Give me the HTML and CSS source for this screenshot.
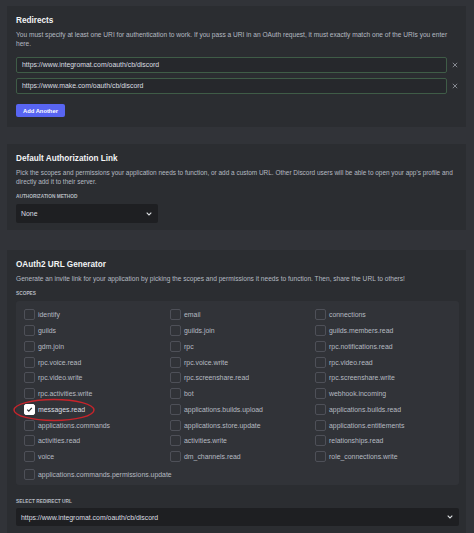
FILE: index.html
```html
<!DOCTYPE html>
<html lang="en">
  <head>
    <meta charset="UTF-8" />
    <meta name="viewport" content="width=device-width, initial-scale=1.0" />
    <title>OAuth2</title>
    <link rel="stylesheet" href="styles.css">
  </head>
  <body>
    <!-- Redirects -->
    <div class="card card-redirects">
      <h2>Redirects</h2>
      <p class="desc">
        You must specify at least one URI for authentication to work. If you pass a URI in an OAuth request, it must exactly match one of the URIs you enter here.
      </p>

      <div class="redirect-row">
        <div class="url-input">https://www.integromat.com/oauth/cb/discord</div>
        <span class="remove">
          <svg width="6" height="6" viewBox="0 0 6 6"><path d="M0.8 0.8L5.2 5.2M5.2 0.8L0.8 5.2" stroke="#8e929a" stroke-width="0.9" /></svg>
        </span>
      </div>
      <div class="redirect-row">
        <div class="url-input">https://www.make.com/oauth/cb/discord</div>
        <span class="remove">
          <svg width="6" height="6" viewBox="0 0 6 6"><path d="M0.8 0.8L5.2 5.2M5.2 0.8L0.8 5.2" stroke="#8e929a" stroke-width="0.9" /></svg>
        </span>
      </div>

      <button class="btn">Add Another</button>
    </div>

    <!-- Default Authorization Link -->
    <div class="card card-auth">
      <h2>Default Authorization Link</h2>
      <p class="desc">
        Pick the scopes and permissions your application needs to function, or add a custom URL. Other Discord users will be able to open your app's profile and directly add it to their server.
      </p>
      <div class="label">Authorization Method</div>
      <div class="select select-method">
        <span>None</span>
        <svg class="chevron" width="6" height="4" viewBox="0 0 6 4"><path d="M0.7 0.7L3 3L5.3 0.7" fill="none" stroke="#dbdee1" stroke-width="1.1" /></svg>
      </div>
    </div>

    <!-- OAuth2 URL Generator -->
    <div class="card card-generator">
      <h2>OAuth2 URL Generator</h2>
      <p class="desc">
        Generate an invite link for your application by picking the scopes and permissions it needs to function. Then, share the URL to others!
      </p>
      <div class="label label-scopes">Scopes</div>

      <div class="scopes">
        <div class="scope"><span class="box"></span>identify</div>
        <div class="scope"><span class="box"></span>email</div>
        <div class="scope"><span class="box"></span>connections</div>

        <div class="scope"><span class="box"></span>guilds</div>
        <div class="scope"><span class="box"></span>guilds.join</div>
        <div class="scope"><span class="box"></span>guilds.members.read</div>

        <div class="scope"><span class="box"></span>gdm.join</div>
        <div class="scope"><span class="box"></span>rpc</div>
        <div class="scope"><span class="box"></span>rpc.notifications.read</div>

        <div class="scope"><span class="box"></span>rpc.voice.read</div>
        <div class="scope"><span class="box"></span>rpc.voice.write</div>
        <div class="scope"><span class="box"></span>rpc.video.read</div>

        <div class="scope"><span class="box"></span>rpc.video.write</div>
        <div class="scope"><span class="box"></span>rpc.screenshare.read</div>
        <div class="scope"><span class="box"></span>rpc.screenshare.write</div>

        <div class="scope"><span class="box"></span>rpc.activities.write</div>
        <div class="scope"><span class="box"></span>bot</div>
        <div class="scope"><span class="box"></span>webhook.incoming</div>

        <div class="scope scope-checked">
          <span class="box checked">
            <svg width="7" height="7" viewBox="0 0 7 7"><path d="M1.2 3.6L2.8 5.1L5.8 1.8" fill="none" stroke="#2b2d31" stroke-width="1.2" /></svg>
          </span>messages.read
          <!-- annotation -->
          <svg class="circle" width="84" height="26" viewBox="0 0 84 26"><ellipse cx="42" cy="13" rx="40" ry="10.5" fill="none" stroke="#c8242b" stroke-width="1.4" /></svg>
        </div>
        <div class="scope"><span class="box"></span>applications.builds.upload</div>
        <div class="scope"><span class="box"></span>applications.builds.read</div>

        <div class="scope"><span class="box"></span>applications.commands</div>
        <div class="scope"><span class="box"></span>applications.store.update</div>
        <div class="scope"><span class="box"></span>applications.entitlements</div>

        <div class="scope"><span class="box"></span>activities.read</div>
        <div class="scope"><span class="box"></span>activities.write</div>
        <div class="scope"><span class="box"></span>relationships.read</div>

        <div class="scope"><span class="box"></span>voice</div>
        <div class="scope"><span class="box"></span>dm_channels.read</div>
        <div class="scope"><span class="box"></span>role_connections.write</div>

        <div class="scope scope-wide"><span class="box"></span>applications.commands.permissions.update</div>
      </div>

      <div class="label label-redirect">Select Redirect URL</div>
      <div class="select select-redirect">
        <span>https://www.integromat.com/oauth/cb/discord</span>
        <svg class="chevron" width="6" height="4" viewBox="0 0 6 4"><path d="M0.7 0.7L3 3L5.3 0.7" fill="none" stroke="#dbdee1" stroke-width="1.1" /></svg>
      </div>
    </div>
  </body>
</html>
```

FILE: styles.css
```css
* {
  margin: 0;
  padding: 0;
  box-sizing: border-box;
}

body {
  font-family: "Liberation Sans", Arial, sans-serif;
  background-color: #313338;
  color: #dbdee1;
  padding: 6px 8px 0 7px;
  overflow: hidden;
}

.card {
  background-color: #2b2d31;
  padding: 10px 7px 10px 9px;
}

.card-auth {
  margin-top: 17px;
  padding-bottom: 7px;
}

.card-generator {
  margin-top: 20px;
}

h2 {
  font-size: 8.2px;
  line-height: 10px;
  font-weight: bold;
  color: #f2f3f5;
}

.desc {
  font-size: 6.6px;
  line-height: 9px;
  color: #b5bac1;
  margin-top: 3.5px;
}

.card-auth .desc {
  font-size: 6.45px;
}

/* redirects */
.redirect-row {
  display: flex;
  align-items: center;
  margin-top: 5px;
}

.card-redirects .desc + .redirect-row {
  margin-top: 9.5px;
}

.url-input {
  flex: 1;
  height: 16px;
  line-height: 14px;
  padding-left: 5px;
  font-size: 6.9px;
  color: #dbdee1;
  background-color: #26282c;
  border: 1px solid #3f5c47;
  border-radius: 2px;
}

.remove {
  display: flex;
  width: 6px;
  margin-left: 5px;
  margin-right: 1px;
}

.btn {
  display: block;
  margin-top: 10px;
  height: 13px;
  padding: 0 7px;
  font-family: inherit;
  font-size: 5.8px;
  font-weight: bold;
  color: #ffffff;
  background-color: #5865f2;
  border: none;
  border-radius: 2px;
}

/* labels + selects */
.label {
  font-size: 4.8px;
  line-height: 6px;
  font-weight: bold;
  text-transform: uppercase;
  color: #b5bac1;
  margin-top: 8.5px;
}

.select {
  display: flex;
  align-items: center;
  justify-content: space-between;
  margin-top: 4px;
  padding: 0 6px 0 5px;
  font-size: 6.9px;
  color: #dbdee1;
  background-color: #1e1f22;
  border-radius: 2px;
}

.select-method {
  width: 142px;
  height: 19px;
}

.select-redirect {
  height: 18px;
  margin-top: 3px;
}

.chevron {
  display: block;
}

/* scopes */
.label-scopes {
  margin-top: 8.5px;
}

.scopes {
  display: grid;
  grid-template-columns: 146px 145px 1fr;
  grid-auto-rows: 15.75px;
  margin-top: 4px;
  padding: 6px 8px 5px 8px;
  background-color: #313338;
  border-radius: 3px;
}

.scope {
  position: relative;
  display: flex;
  align-items: center;
  font-size: 6.9px;
  color: #b5bac1;
  white-space: nowrap;
}

.scope-wide {
  grid-column: 1 / -1;
  margin-top: 4.6px;
}

.box {
  flex: none;
  display: flex;
  align-items: center;
  justify-content: center;
  width: 11px;
  height: 11px;
  margin-right: 3px;
  border: 1px solid #4e5058;
  border-radius: 2px;
}

.box.checked {
  background-color: #ffffff;
  border-color: #ffffff;
}

.scope-checked {
  color: #dbdee1;
}

.circle {
  position: absolute;
  left: -12px;
  top: -5px;
}

.label-redirect {
  margin-top: 14px;
}
```
